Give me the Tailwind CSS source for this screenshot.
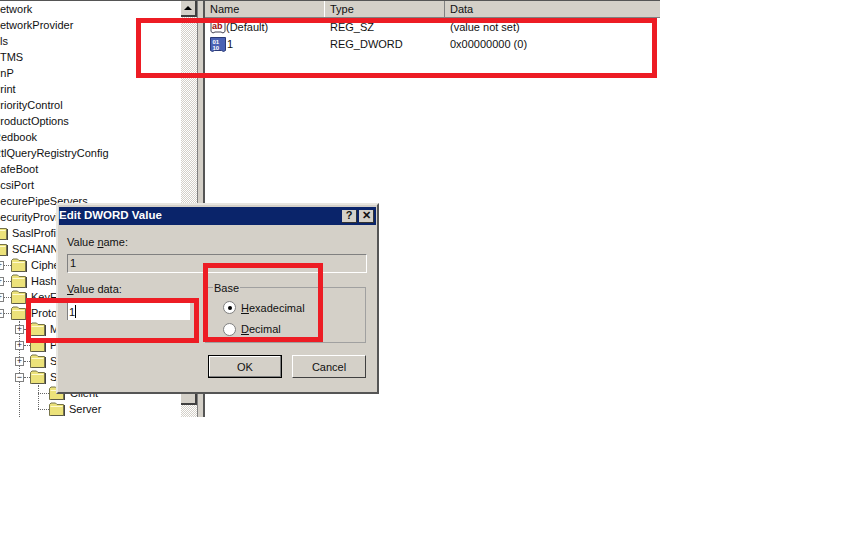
<!DOCTYPE html>
<html lang="en">
<head>
  <meta charset="UTF-8" />
  <title>Edit DWORD Value</title>
  <script src="https://cdn.jsdelivr.net/npm/@tailwindcss/browser@4"></script>
</head>
<body class="bg-white text-[#111] font-['Liberation_Sans',sans-serif] text-[11px] leading-4">
  <svg class="hidden">
    <symbol id="folder" viewBox="0 0 16 14">
      <path d="M.5 13.5V2.5L2 1h4.5L8 2.5h6.5v11z" fill="#ece27a" stroke="#77744a"/>
      <path d="M1.5 4h12v1h-12z" fill="#fffbd0"/>
      <path d="M15.5 3v11H2" fill="none" stroke="#444"/>
    </symbol>
  </svg>

  <div class="relative w-[864px] h-[540px] overflow-hidden bg-white">
    <!-- regedit window -->
    <div class="flex w-[660px] h-[417px] border-t border-[#555]">
      <!-- tree -->
      <div class="relative w-[181px] h-full overflow-hidden whitespace-nowrap">
        <div class="h-4 -ml-[8px]">Network</div>
        <div class="h-4 -ml-[8px]">NetworkProvider</div>
        <div class="h-4 -ml-[8px]">Nls</div>
        <div class="h-4 -ml-[8px]">NTMS</div>
        <div class="h-4 -ml-[7px]">PnP</div>
        <div class="h-4 -ml-[7px]">Print</div>
        <div class="h-4 -ml-[7px]">PriorityControl</div>
        <div class="h-4 -ml-[7px]">ProductOptions</div>
        <div class="h-4 -ml-[7px]">Redbook</div>
        <div class="h-4 -ml-[7px]">RtlQueryRegistryConfig</div>
        <div class="h-4 -ml-[7px]">SafeBoot</div>
        <div class="h-4 -ml-[7px]">ScsiPort</div>
        <div class="h-4 -ml-[7px]">SecurePipeServers</div>
        <div class="h-4 -ml-[7px]">SecurityProviders</div>
        <div class="h-4 flex items-center -ml-[8px]"><svg class="w-4 h-[14px] shrink-0"><use href="#folder"/></svg><span class="ml-[4px]">SaslProfiles</span></div>
        <div class="h-4 flex items-center -ml-[8px]"><svg class="w-4 h-[14px] shrink-0"><use href="#folder"/></svg><span class="ml-[4px]">SCHANNEL</span></div>
        <div class="h-4 flex items-center -ml-[5px]"><span class="w-[9px] h-[9px] shrink-0 border border-[#808080] flex items-center justify-center text-[9px] leading-none">+</span><span class="w-[7px] border-t border-dotted border-[#666]"></span><svg class="w-4 h-[14px] shrink-0"><use href="#folder"/></svg><span class="ml-[4px]">Ciphers</span></div>
        <div class="h-4 flex items-center -ml-[5px]"><span class="w-[9px] h-[9px] shrink-0 border border-[#808080] flex items-center justify-center text-[9px] leading-none">+</span><span class="w-[7px] border-t border-dotted border-[#666]"></span><svg class="w-4 h-[14px] shrink-0"><use href="#folder"/></svg><span class="ml-[4px]">Hashes</span></div>
        <div class="h-4 flex items-center -ml-[5px]"><span class="w-[9px] h-[9px] shrink-0 border border-[#808080] flex items-center justify-center text-[9px] leading-none">+</span><span class="w-[7px] border-t border-dotted border-[#666]"></span><svg class="w-4 h-[14px] shrink-0"><use href="#folder"/></svg><span class="ml-[4px]">KeyExchange</span></div>
        <div class="h-4 flex items-center -ml-[5px]"><span class="w-[9px] h-[9px] shrink-0 border border-[#808080] flex items-center justify-center text-[9px] leading-none">−</span><span class="w-[7px] border-t border-dotted border-[#666]"></span><svg class="w-4 h-[14px] shrink-0"><use href="#folder"/></svg><span class="ml-[4px]">Protocols</span></div>
        <div class="h-4 flex items-center pl-[15px]"><span class="relative z-10 w-[9px] h-[9px] shrink-0 border border-[#808080] bg-white flex items-center justify-center text-[9px] leading-none">+</span><span class="w-[6px] border-t border-dotted border-[#666]"></span><svg class="w-4 h-[14px] shrink-0"><use href="#folder"/></svg><span class="ml-[4px]">Multi-Protocol</span></div>
        <div class="h-4 flex items-center pl-[15px]"><span class="relative z-10 w-[9px] h-[9px] shrink-0 border border-[#808080] bg-white flex items-center justify-center text-[9px] leading-none">+</span><span class="w-[6px] border-t border-dotted border-[#666]"></span><svg class="w-4 h-[14px] shrink-0"><use href="#folder"/></svg><span class="ml-[4px]">PCT 1.0</span></div>
        <div class="h-4 flex items-center pl-[15px]"><span class="relative z-10 w-[9px] h-[9px] shrink-0 border border-[#808080] bg-white flex items-center justify-center text-[9px] leading-none">+</span><span class="w-[6px] border-t border-dotted border-[#666]"></span><svg class="w-4 h-[14px] shrink-0"><use href="#folder"/></svg><span class="ml-[4px]">SSL 2.0</span></div>
        <div class="h-4 flex items-center pl-[15px]"><span class="relative z-10 w-[9px] h-[9px] shrink-0 border border-[#808080] bg-white flex items-center justify-center text-[9px] leading-none">−</span><span class="w-[6px] border-t border-dotted border-[#666]"></span><svg class="w-4 h-[14px] shrink-0"><use href="#folder"/></svg><span class="ml-[4px]">SSL 3.0</span></div>
        <div class="h-4 flex items-center pl-[38px]"><span class="w-[11px] border-t border-dotted border-[#666]"></span><svg class="w-4 h-[14px] shrink-0"><use href="#folder"/></svg><span class="ml-[5px]">Client</span></div>
        <div class="h-4 flex items-center pl-[38px]"><span class="w-[11px] border-t border-dotted border-[#666]"></span><svg class="w-4 h-[14px] shrink-0"><use href="#folder"/></svg><span class="ml-[4px]">Server</span></div>
        <!-- tree guide lines -->
        <span class="absolute left-[19px] top-[320px] h-[96px] border-l border-dotted border-[#666]"></span>
        <span class="absolute left-[38px] top-[384px] h-[24px] border-l border-dotted border-[#666]"></span>
      </div>
      <!-- scrollbar -->
      <div class="w-4 flex flex-col bg-[repeating-conic-gradient(#d4d0c8_0_25%,#fff_0_50%)] bg-[length:2px_2px]">
        <div class="h-4 bg-[#d4d0c8] border-r-2 border-b-2 border-[#404040] flex items-center justify-center">
          <span class="w-0 h-0 border-x-[4px] border-x-transparent border-b-[4px] border-b-black"></span>
        </div>
        <div class="h-[238px]"></div>
        <div class="h-[150px] bg-[#d4d0c8] border-r-2 border-b-2 border-[#404040]"></div>
      </div>
      <!-- splitter -->
      <div class="w-[8px] bg-[#d4d0c8] border-l border-r-2 border-l-[#808080] border-r-[#555]"></div>
      <!-- list -->
      <div class="flex-1">
        <div class="flex h-[17px] bg-[#d4d0c8] border-b border-[#808080]">
          <div class="w-[120px] pl-[5px] border-r border-white">Name</div>
          <div class="w-[120px] pl-[5px] border-r border-[#808080]">Type</div>
          <div class="pl-[5px]">Data</div>
        </div>
        <div class="flex h-4 mt-px items-center">
          <div class="w-[120px] flex items-center pl-[5px]">
            <svg class="w-4 h-4 shrink-0" viewBox="0 0 16 16"><path d="M1 2.5h14v10l-2 1.5-2-1H5l-2 1-2-1.5z" fill="#fff" stroke="#445"/><text x="2" y="9.5" font-size="9" font-weight="700" fill="#9b0a0a" font-family="Liberation Sans">ab</text></svg>
            <span>(Default)</span>
          </div>
          <div class="w-[120px] pl-[5px]">REG_SZ</div>
          <div class="pl-[5px]">(value not set)</div>
        </div>
        <div class="flex h-4 mt-px items-center">
          <div class="w-[120px] flex items-center pl-[5px]">
            <svg class="w-4 h-4 shrink-0" viewBox="0 0 16 16"><path d="M.5 1.5h15v13l-2 1-2-1h-7l-2 1-2-1z" fill="#4a62b4" stroke="#2a3a78"/><text x="2.5" y="7.5" font-size="6" font-weight="700" fill="#fff" font-family="Liberation Sans">01</text><text x="2.5" y="13.5" font-size="6" font-weight="700" fill="#fff" font-family="Liberation Sans">10</text></svg>
            <span class="ml-px">1</span>
          </div>
          <div class="w-[120px] pl-[5px]">REG_DWORD</div>
          <div class="pl-[5px]">0x00000000 (0)</div>
        </div>
      </div>
    </div>

    <!-- dialog -->
    <div class="absolute left-[56px] top-[203px] w-[323px] h-[191px] bg-[#d4d0c8] border-2 border-t-[#e8e6e0] border-l-[#e8e6e0] border-r-[#555] border-b-[#555] p-px">
      <div class="h-[18px] mt-px bg-[#0a246a] flex items-center justify-between pr-[2px]">
        <span class="text-white font-bold text-[11.5px] -mt-[2px]">Edit DWORD Value</span>
        <div class="flex gap-[2px]">
          <span class="w-[15px] h-[13px] bg-[#d4d0c8] border-r border-b border-[#333] flex items-center justify-center font-bold leading-none">?</span>
          <span class="w-[15px] h-[13px] bg-[#d4d0c8] border-r border-b border-[#333] flex items-center justify-center font-bold leading-none">✕</span>
        </div>
      </div>
      <div class="px-[8px] pt-[9px]">
        <div class="h-4"><span>Value <u>n</u>ame:</span></div>
        <div class="h-[19px] mt-[4px] w-[300px] border-t border-l border-[#808080] border-b border-r border-b-white border-r-white pl-[2px]">1</div>
        <div class="flex mt-[7px]">
          <div class="w-[138px]">
            <div class="h-4 mt-px"><u>V</u>alue data:</div>
            <div class="h-[18px] w-[123px] mt-[5px] bg-white border-t border-l border-[#808080] pl-px flex items-center"><span>1</span><span class="w-px h-[13px] bg-black"></span></div>
          </div>
          <div class="relative w-[161px] h-[56px] mt-[7px] border border-[#a0a0a0]">
            <span class="absolute left-[7px] -top-[8px] bg-[#d4d0c8] px-px">Base</span>
            <div class="flex items-center gap-[5px] pl-[17px] pt-[11px]">
              <span class="w-[13px] h-[13px] rounded-full bg-white border border-[#808080] flex items-center justify-center"><span class="w-1 h-1 rounded-full bg-black"></span></span>
              <span class="mt-px"><u>H</u>exadecimal</span>
            </div>
            <div class="flex items-center gap-[5px] pl-[17px] pt-[5px]">
              <span class="w-[13px] h-[13px] rounded-full bg-white border border-[#808080]"></span>
              <span><u>D</u>ecimal</span>
            </div>
          </div>
        </div>
        <div class="flex justify-end gap-[10px] mt-[12px] w-[299px]">
          <div class="w-[74px] h-[23px] border border-black bg-[#d4d0c8] flex items-center justify-center shadow-[inset_-1px_-1px_0_#808080,inset_1px_1px_0_#fff]">OK</div>
          <div class="w-[74px] h-[23px] bg-[#d4d0c8] flex items-center justify-center border border-t-white border-l-white border-r-[#404040] border-b-[#404040]">Cancel</div>
        </div>
      </div>
    </div>

    <!-- red annotation boxes -->
    <div class="absolute left-[136px] top-[18px] w-[521px] h-[60px] border-[5px] border-[#ed1c24]"></div>
    <div class="absolute left-[26px] top-[298px] w-[173px] h-[45px] border-[5px] border-[#ed1c24]"></div>
    <div class="absolute left-[203px] top-[263px] w-[120px] h-[79px] border-[5px] border-[#ed1c24]"></div>
  </div>
</body>
</html>
